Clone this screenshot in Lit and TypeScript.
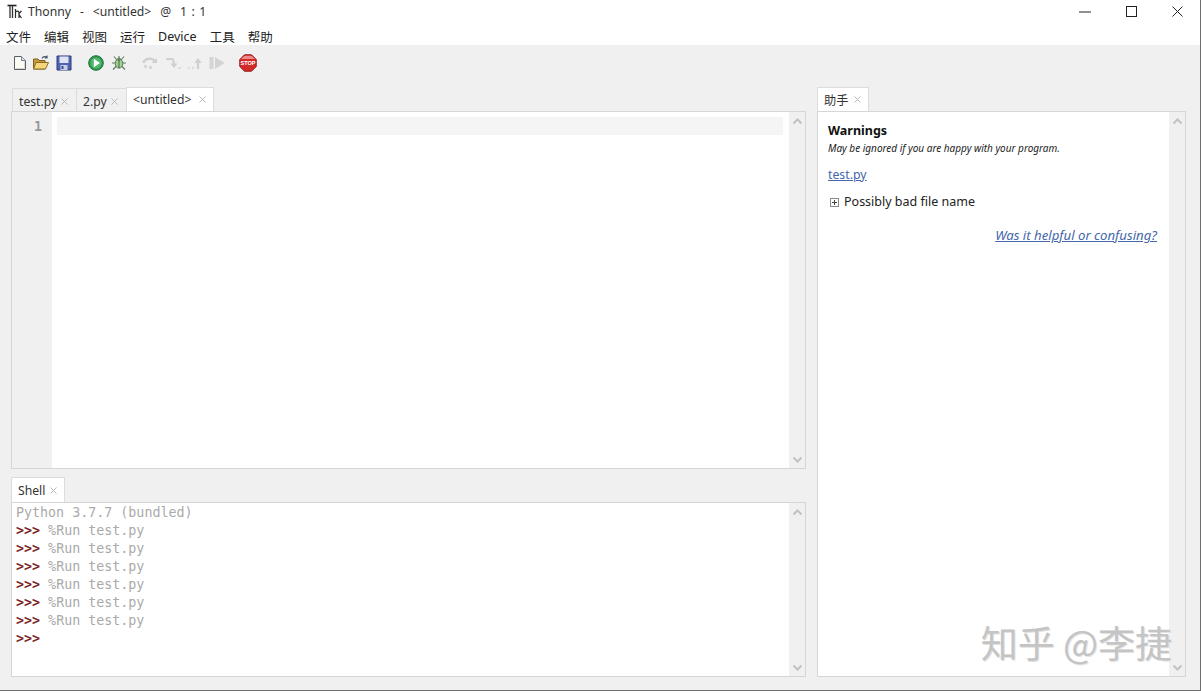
import { LitElement, html, css, svg } from "lit";
import { customElement } from "lit/decorators.js";

const close = svg`<svg class="x" width="7" height="7" viewBox="0 0 7 7"><path d="M0.5 .5L6.5 6.5M6.5 .5L.5 6.5" stroke="#b8b8b8" fill="none"/></svg>`;

const chevUp = html`<svg class="chev" width="11" height="7" viewBox="0 0 11 7"><path d="M1.500 5.500L5.500 1.500L9.500 5.500" stroke="#c2c2c2" stroke-width="2" fill="none"/></svg>`;
const chevDown = html`<svg class="chev" width="11" height="7" viewBox="0 0 11 7"><path d="M1.500 1.500L5.500 5.500L9.500 1.500" stroke="#c2c2c2" stroke-width="2" fill="none"/></svg>`;

const icons = {
  file: html`<svg width="14" height="16" viewBox="0 0 14 16"><path d="M1.500 1.500H8.500L12.500 5.500V14.500H1.500Z" fill="#fbfbf3" stroke="#56606a"/><path d="M8.500 1.500V5.500H12.500" fill="#d9dee4" stroke="#7c8690"/><path d="M2.500 13.500H11.500V6.500" stroke="#d8d8c6" fill="none"/></svg>`,
  open: html`<svg width="18" height="16" viewBox="0 0 18 16"><path d="M1.500 14V4H6L7 5.500H13V14Z" fill="#c79a3c" stroke="#7d6120"/><path d="M1.500 14L4 7.500H16.500L13.500 14Z" fill="#f4d67c" stroke="#8c6c24"/><path d="M10 3.500C11 1.500 13 1 15 2.200M15 .6V2.800H12.800" stroke="#4a5a70" stroke-width="1.200" fill="none"/></svg>`,
  save: html`<svg width="16" height="16" viewBox="0 0 16 16"><path d="M1 1H15V15H1Z" fill="#5062b4" stroke="#2f3c78"/><rect x="3.500" y="1.500" width="9" height="6.500" fill="#dde3f3"/><rect x="4.500" y="10" width="7" height="5" fill="#c8cfe2"/><rect x="5.500" y="11" width="2" height="3" fill="#3c4c90"/></svg>`,
  run: html`<svg width="16" height="16" viewBox="0 0 16 16"><circle cx="8" cy="8" r="7.300" fill="#2f9a50" stroke="#1d6f38"/><circle cx="8" cy="8" r="5.600" fill="#4fb56c"/><path d="M5.800 3.800L12 8L5.800 12.200Z" fill="#fff"/></svg>`,
  bug: html`<svg width="16" height="16" viewBox="0 0 16 16"><path d="M3 1.500L6 5M13 1.500L10 5M1 8H15M2 14.500L5.500 11M14 14.500L10.500 11M8 1V3" stroke="#5f7a64" stroke-width="1.100"/><ellipse cx="8" cy="8.500" rx="3.800" ry="4.600" fill="#a6cf96" stroke="#4f7a4a"/><circle cx="8" cy="4.200" r="1.700" fill="#5d8c58"/><path d="M8 5V13" stroke="#3f6a3c"/></svg>`,
  over: html`<svg width="16" height="14" viewBox="0 0 16 14"><path d="M1.500 7C2.500 2 10 1 13 5.500" stroke="#d0d0d0" stroke-width="2.400" fill="none"/><path d="M9.500 7H15V2Z" fill="#cfcfcf"/><rect x="2" y="9" width="3" height="3" fill="#d8d8d8"/><rect x="7" y="10" width="3" height="3" fill="#d8d8d8"/></svg>`,
  into: html`<svg width="16" height="14" viewBox="0 0 16 14"><path d="M1 3H6.500C8.500 3 9 5 9 8" stroke="#d0d0d0" stroke-width="2.200" fill="none"/><path d="M5.500 7.500H12.500L9 12Z" fill="#cfcfcf"/><rect x="13" y="11" width="3" height="2" fill="#dcdcdc"/></svg>`,
  out: html`<svg width="16" height="14" viewBox="0 0 16 14"><path d="M11 13V7" stroke="#d0d0d0" stroke-width="2.400"/><path d="M7.500 7H14.500L11 2Z" fill="#cfcfcf"/><rect x="1" y="11" width="2" height="2" fill="#dcdcdc"/><rect x="5" y="11" width="2" height="2" fill="#dcdcdc"/></svg>`,
  resume: html`<svg width="16" height="14" viewBox="0 0 16 14"><rect x="0.500" y="1" width="4" height="12" fill="#d4d4d4"/><path d="M6 1L15.500 7L6 13Z" fill="#d2d2d2"/></svg>`,
  stop: html`<svg width="18" height="18" viewBox="0 0 18 18"><path d="M5.500 .8H12.500L17.200 5.500V12.500L12.500 17.200H5.500L.8 12.500V5.500Z" fill="#d42a2a" stroke="#8e1616"/><path d="M5.500 1.800H12.500L16 5H2Z" fill="#ee8a8a"/><text x="9" y="11" font-size="5.600" font-weight="700" fill="#fff" text-anchor="middle" font-family="Liberation Sans, sans-serif">STOP</text></svg>`,
  logo: html`<svg width="15" height="15" viewBox="0 0 15 15"><path d="M.5 1.500H9.500" stroke="#222" stroke-width="1.600"/><path d="M3 1.500V14M5.500 1.500V14" stroke="#333" stroke-width="1.300"/><path d="M8.500 5V14M8.500 8C10.500 6.500 11.500 7 12 8.500V14M11.500 10L14.500 7M12 10.500L14.500 14" stroke="#2b2b2b" stroke-width="1.200" fill="none"/></svg>`,
};

@customElement("app-root")
export class AppRoot extends LitElement {
  static styles = css`
    :host {
      display: block;
      width: 1201px;
      height: 693px;
      overflow: hidden;
      position: relative;
      background: #fff;
      font-family: "Noto Sans", "Noto Sans CJK SC", sans-serif;
      font-size: 13px;
      color: #1c1c1c;
    }
    .window {
      width: 1201px;
      height: 691px;
      box-sizing: border-box;
      border-right: 1px solid #6e6e6e;
      border-bottom: 1px solid #6e6e6e;
      display: flex;
      flex-direction: column;
      background: #f0f0f0;
    }
    .titlebar {
      height: 23px;
      background: #fff;
      display: flex;
      align-items: center;
      padding-left: 7px;
      flex: none;
      white-space: pre;
    }
    .title {
      margin-left: 6px;
      font-size: 12.200px;
      word-spacing: 1.300px;
      color: #333;
      flex: 1;
    }
    .wbtns { display: flex; align-items: center; }
    .wbtn { width: 46px; height: 23px; display: flex; align-items: center; justify-content: center; }
    .menubar {
      height: 22px;
      background: #fff;
      display: flex;
      align-items: center;
      padding: 4px 0 0 6px;
      box-sizing: border-box;
      gap: 13px;
      flex: none;
      font-size: 12.500px;
      color: #222;
    }
    .toolbar {
      height: 36px;
      display: flex;
      align-items: center;
      padding: 0 0 1px 13px;
      flex: none;
      box-sizing: border-box;
    }
    .tb { display: flex; justify-content: center; align-items: center; flex: none; }
    .main {
      flex: 1;
      display: flex;
      padding: 6px 14px 13px 11px;
      gap: 11px;
      min-height: 0;
    }
    .left { width: 795px; display: flex; flex-direction: column; gap: 8px; flex: none; }
    .right { flex: 1; display: flex; flex-direction: column; min-width: 0; }
    .pane { display: flex; flex-direction: column; min-height: 0; }
    .pane.editor { height: 382px; flex: none; }
    .pane.shell { flex: 1; }
    .pane.help { flex: 1; }
    .tabs { display: flex; height: 24px; padding-left: 1px; flex: none; align-items: flex-end; }
    .shell .tabs { height: 25px; }
    .help .tabs, .shell .tabs { padding-left: 0; }
    .tab {
      box-sizing: border-box;
      height: 23px;
      background: #f0f0f0;
      border: 1px solid #dcdcdc;
      border-bottom: none;
      border-right: none;
      display: flex;
      align-items: center;
      justify-content: space-between;
      padding: 2px 8px 0 6px;
      font-size: 12.200px;
      color: #333;
    }
    .tab.active {
      background: #fff;
      height: 100%;
      border-right: 1px solid #dcdcdc;
      padding: 0 7px 0 6px;
    }
    .x { flex: none; }
    .body {
      flex: 1;
      display: flex;
      border: 1px solid #d6d6d6;
      background: #fff;
      min-height: 0;
      position: relative;
    }
    .gutter {
      width: 40px;
      background: #f0f0f0;
      flex: none;
      box-sizing: border-box;
      padding: 6px 10px 0 0;
      text-align: right;
      font-family: "DejaVu Sans Mono", monospace;
      font-size: 13.300px;
      font-weight: 700;
      color: #999;
      line-height: 18px;
    }
    .code { flex: 1; padding: 5px 6px 0 5px; min-width: 0; }
    .curline { height: 18px; background: #f5f5f5; }
    .sb {
      width: 16px;
      flex: none;
      background: #f0f0f0;
      display: flex;
      flex-direction: column;
      justify-content: space-between;
      align-items: center;
      padding: 6px 0 5px;
      box-sizing: border-box;
    }
    .shelltext {
      flex: 1;
      padding: 1px 0 0 4px;
      font-family: "DejaVu Sans Mono", monospace;
      font-size: 13.330px;
      line-height: 18px;
      color: #aaa;
      white-space: pre;
    }
    .prompt { color: #7a1f1f; font-weight: 700; }
    .help-body { flex: 1; padding: 10px 12px 0 10px; min-width: 0; }
    .h { font-weight: 700; font-size: 12.500px; color: #111; line-height: 17px; }
    .sub {
      font-style: italic;
      font-size: 10px;
      color: #222;
      line-height: 14px;
      margin-top: 2px;
    }
    a { color: #4466aa; text-decoration: underline; }
    .lnk { font-size: 12.300px; line-height: 18px; margin-top: 11px; }
    .warn {
      display: flex;
      align-items: center;
      gap: 5px;
      margin-top: 9px;
      padding-left: 2px;
      font-size: 12.500px;
      line-height: 18px;
      color: #222;
    }
    .fb { text-align: right; font-style: italic; font-size: 13.200px; line-height: 18px; margin-top: 15px; }
    .mark {
      position: absolute;
      right: 13px;
      bottom: 15px;
      font-size: 37px;
      line-height: 38px;
      color: #c4c4c4;
      white-space: nowrap;
      font-family: "Noto Sans CJK SC", sans-serif;
      text-shadow: 1px 1px 0 #e2e2e2;
    }
    .w14 { width: 14px; } .w16 { width: 16px; } .w18 { width: 18px; }
    .m5 { margin-left: 5px; } .m6 { margin-left: 6px; } .m7 { margin-left: 7px; }
    .m14 { margin-left: 14px; } .m15 { margin-left: 15px; } .m16 { margin-left: 16px; }
  `;

  private tabs(items: { n: string; w: number; a?: boolean }[]) {
    return html`<div class="tabs">
      ${items.map(
        (t) => html`<div class="tab ${t.a ? "active" : ""}" style="width:${t.w}px">
          <span>${t.n}</span>${close}
        </div>`
      )}
    </div>`;
  }

  render() {
    const lines = Array.from({ length: 6 }, () => html`<div><span class="prompt">&gt;&gt;&gt;</span> %Run test.py</div>`);
    return html`
      <div class="window">
        <div class="titlebar">
          ${icons.logo}
          <span class="title">Thonny  -  &lt;untitled&gt;  @  1 : 1</span>
          <div class="wbtns">
            <div class="wbtn"><svg width="12" height="2" viewBox="0 0 12 2"><path d="M0 1H12" stroke="#222"/></svg></div>
            <div class="wbtn"><svg width="11" height="11" viewBox="0 0 11 11"><rect x=".5" y=".5" width="10" height="10" fill="none" stroke="#222"/></svg></div>
            <div class="wbtn"><svg width="11" height="11" viewBox="0 0 11 11"><path d="M.5 .5L10.500 10.500M10.500 .5L.5 10.500" stroke="#222"/></svg></div>
          </div>
        </div>
        <div class="menubar">
          <span>文件</span><span>编辑</span><span>视图</span><span>运行</span><span>Device</span><span>工具</span><span>帮助</span>
        </div>
        <div class="toolbar">
          <div class="tb w14">${icons.file}</div>
          <div class="tb w18 m5">${icons.open}</div>
          <div class="tb w16 m6">${icons.save}</div>
          <div class="tb w16 m16">${icons.run}</div>
          <div class="tb w16 m7">${icons.bug}</div>
          <div class="tb w16 m15">${icons.over}</div>
          <div class="tb w16 m7">${icons.into}</div>
          <div class="tb w16 m6">${icons.out}</div>
          <div class="tb w16 m6">${icons.resume}</div>
          <div class="tb w18 m14">${icons.stop}</div>
        </div>
        <div class="main">
          <div class="left">
            <div class="pane editor">
              ${this.tabs([
                { n: "test.py", w: 64 },
                { n: "2.py", w: 50 },
                { n: "<untitled>", w: 88, a: true },
              ])}
              <div class="body">
                <div class="gutter">1</div>
                <div class="code"><div class="curline"></div></div>
                <div class="sb">${chevUp}${chevDown}</div>
              </div>
            </div>
            <div class="pane shell">
              ${this.tabs([{ n: "Shell", w: 54, a: true }])}
              <div class="body">
                <div class="shelltext"><div>Python 3.7.7 (bundled)</div>${lines}<div><span class="prompt">&gt;&gt;&gt;</span></div></div>
                <div class="sb">${chevUp}${chevDown}</div>
              </div>
            </div>
          </div>
          <div class="right">
            <div class="pane help">
              ${this.tabs([{ n: "助手", w: 52, a: true }])}
              <div class="body">
                <div class="help-body">
                  <div class="h">Warnings</div>
                  <div class="sub">May be ignored if you are happy with your program.</div>
                  <div class="lnk"><a>test.py</a></div>
                  <div class="warn">
                    <svg width="9" height="9" viewBox="0 0 9 9"><rect x=".5" y=".5" width="8" height="8" fill="#fff" stroke="#8a8a8a"/><path d="M2 4.500H7M4.500 2V7" stroke="#444"/></svg>
                    <span>Possibly bad file name</span>
                  </div>
                  <div class="fb"><a>Was it helpful or confusing?</a></div>
                </div>
                <div class="sb">${chevUp}${chevDown}</div>
                <div class="mark">知乎 @李捷</div>
              </div>
            </div>
          </div>
        </div>
      </div>
    `;
  }
}
